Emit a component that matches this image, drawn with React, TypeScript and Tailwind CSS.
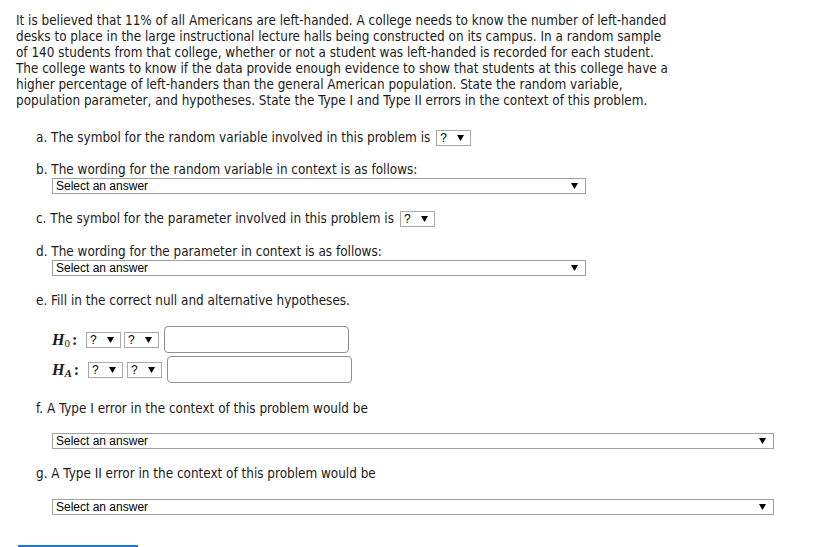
import React from "react";

const font = { fontFamily: '"DejaVu Sans Condensed", "DejaVu Sans", sans-serif' };

function Arrow() {
  return (
    <svg width="7" height="6" viewBox="0 0 7 6" className="shrink-0">
      <path d="M0 0 H7 L3.5 6 Z" fill="#000" />
    </svg>
  );
}

function SmallSelect() {
  return (
    <span className="inline-flex h-[16px] w-[35px] shrink-0 items-center justify-between border border-[#a9a9a9] bg-white pl-[3px] pr-[6px] align-middle text-[12px] leading-none text-black [font-family:'Liberation_Sans',Arial,sans-serif]">
      <span>?</span>
      <Arrow />
    </span>
  );
}

function WideSelect({ width }: { width: string }) {
  return (
    <div
      className={`${width} flex h-[16px] items-center justify-between border border-[#a0a0a0] bg-white pl-[3px] pr-[7px] text-[12px] leading-none text-black [font-family:'Liberation_Sans',Arial,sans-serif]`}
    >
      <span>Select an answer</span>
      <Arrow />
    </div>
  );
}

export default function App() {
  return (
    <div className="relative h-[547px] w-[833px] overflow-hidden bg-white text-[#1a1a1a]" style={font}>
      <div className="pl-[16px] pt-[13px] text-[13.4px] leading-[16px]">
        <p>
          It is believed that 11% of all Americans are left-handed. A college needs to know the number of left-handed
          <br />
          desks to place in the large instructional lecture halls being constructed on its campus. In a random sample
          <br />
          of 140 students from that college, whether or not a student was left-handed is recorded for each student.
          <br />
          The college wants to know if the data provide enough evidence to show that students at this college have a
          <br />
          higher percentage of left-handers than the general American population. State the random variable,
          <br />
          population parameter, and hypotheses. State the Type I and Type II errors in the context of this problem.
        </p>

        <div className="ml-[20px]">
          <div className="mt-[21px] flex h-[16px] items-center gap-[6px]">
            <span>a. The symbol for the random variable involved in this problem is</span>
            <SmallSelect />
          </div>

          <div className="mt-[16px] h-[16px]">b. The wording for the random variable in context is as follows:</div>
          <div className="ml-[16px]">
            <WideSelect width="w-[534px]" />
          </div>

          <div className="mt-[17px] flex h-[16px] items-center gap-[6px]">
            <span>c. The symbol for the parameter involved in this problem is</span>
            <SmallSelect />
          </div>

          <div className="mt-[17px] h-[16px]">d. The wording for the parameter in context is as follows:</div>
          <div className="ml-[16px]">
            <WideSelect width="w-[534px]" />
          </div>

          <div className="mt-[17px] h-[16px]">e. Fill in the correct null and alternative hypotheses.</div>

          <div className="ml-[16px] mt-[17px] flex flex-col gap-[3px]">
            <div className="flex h-[27px] items-center">
              <span className="w-[34px] whitespace-nowrap text-[16px] [font-family:'Liberation_Serif','Times_New_Roman',serif]">
                <i className="font-bold">H</i>
                <sub className="text-[11px]">0</sub>
                <span className="ml-[2px] font-bold">:</span>
              </span>
              <SmallSelect />
              <span className="w-[3px]" />
              <SmallSelect />
              <div className="ml-[5px] h-[27px] w-[185px] rounded-[4px] border border-[#8f8f8f] bg-white" />
            </div>
            <div className="flex h-[27px] items-center">
              <span className="w-[36px] whitespace-nowrap text-[16px] [font-family:'Liberation_Serif','Times_New_Roman',serif]">
                <i className="font-bold">H</i>
                <sub className="text-[11px] font-bold italic">A</sub>
                <span className="ml-[2px] font-bold">:</span>
              </span>
              <SmallSelect />
              <span className="w-[4px]" />
              <SmallSelect />
              <div className="ml-[5px] h-[27px] w-[185px] rounded-[4px] border border-[#8f8f8f] bg-white" />
            </div>
          </div>

          <div className="mt-[18px] h-[16px]">f. A Type I error in the context of this problem would be</div>
          <div className="ml-[16px] mt-[16px]">
            <WideSelect width="w-[722px]" />
          </div>

          <div className="mt-[17px] h-[16px]">g. A Type II error in the context of this problem would be</div>
          <div className="ml-[16px] mt-[17px]">
            <WideSelect width="w-[722px]" />
          </div>
        </div>
      </div>
      <div className="absolute bottom-0 left-[18px] h-[2px] w-[120px] bg-[#1f77d0]" />
    </div>
  );
}
